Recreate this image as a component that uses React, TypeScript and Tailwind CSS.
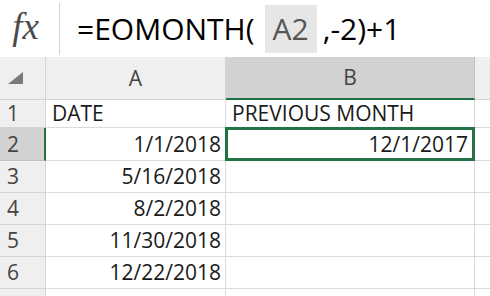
import React from "react";

const rows = [
  { n: "1", a: "DATE", b: "PREVIOUS MONTH", h: "h-[28px]", header: true },
  { n: "2", a: "1/1/2018", b: "12/1/2017", h: "h-[33px]" },
  { n: "3", a: "5/16/2018", b: "", h: "h-[32px]" },
  { n: "4", a: "8/2/2018", b: "", h: "h-[32px]" },
  { n: "5", a: "11/30/2018", b: "", h: "h-[32px]" },
  { n: "6", a: "12/22/2018", b: "", h: "h-[32px]" },
  { n: "", a: "", b: "", h: "h-[32px]" },
];

export default function App() {
  return (
    <div className="w-[490px] h-[296px] overflow-hidden bg-white font-['Open_Sans',sans-serif] text-[#1a1a1a]">
      {/* formula bar */}
      <div className="flex items-center h-[57px]">
        <div className="w-[59px] h-full flex items-center justify-center pr-[8px] pb-[4px]">
          <span className="font-['Liberation_Serif',serif] italic text-[37px] leading-none text-[#4a4a4a]">fx</span>
        </div>
        <div className="w-px h-[52px] bg-[#d4d4d4]" />
        <div className="flex items-center pl-[17px] text-[30px] leading-none text-black">
          <span>=EOMONTH(</span>
          <span className="ml-[10px] mr-[6px] h-[48px] px-[8px] flex items-center bg-[#e6e6e6] text-[#555]">A2</span>
          <span>,-2)+1</span>
        </div>
      </div>

      {/* grid */}
      <div className="grid grid-cols-[46px_180px_249px_1fr] text-[21px] leading-none">
        <div className="h-[43px] bg-[#efefef] border-r border-b border-[#d4d4d4] flex items-center pl-[8px]">
          <svg width="15" height="12" viewBox="0 0 15 12">
            <polygon points="15,0 15,12 0,12" fill="#7a7a7a" />
          </svg>
        </div>
        <div className="h-[43px] bg-[#efefef] border-r border-b border-[#d4d4d4] flex items-center justify-center text-[#444]">
          A
        </div>
        <div className="h-[43px] bg-[#d2d2d2] border-r border-[#c0c0c0] border-b-[2px] border-b-[#217346] flex items-center justify-center text-[#444]">
          B
        </div>
        <div className="h-[43px] bg-[#efefef] border-b border-[#d4d4d4]" />

        {rows.map((r, i) => {
          const sel = r.n === "2";
          return (
            <React.Fragment key={i}>
              <div
                className={
                  sel
                    ? `${r.h} bg-[#d2d2d2] border-b border-[#c0c0c0] border-r-[2px] border-r-[#217346] flex items-center pl-[7px] text-[#444]`
                    : `${r.h} bg-[#efefef] border-r border-b border-[#d4d4d4] flex items-center pl-[7px] text-[#444]`
                }
              >
                {r.n}
              </div>
              <div
                className={`${r.h} border-r border-b border-[#dadada] flex items-center ${
                  r.header ? "justify-start pl-[6px]" : "justify-end pr-[4px]"
                }`}
              >
                {r.a}
              </div>
              <div
                className={`${r.h} relative border-r border-b border-[#dadada] flex items-center ${
                  r.header ? "justify-start pl-[6px]" : "justify-end pr-[6px]"
                }`}
              >
                {r.b}
                {sel && (
                  <div className="absolute -top-[1px] -left-[1px] -right-[1px] -bottom-[1px] border-[3px] border-[#217346]" />
                )}
              </div>
              <div className={`${r.h} border-b border-[#dadada]`} />
            </React.Fragment>
          );
        })}
      </div>
    </div>
  );
}
